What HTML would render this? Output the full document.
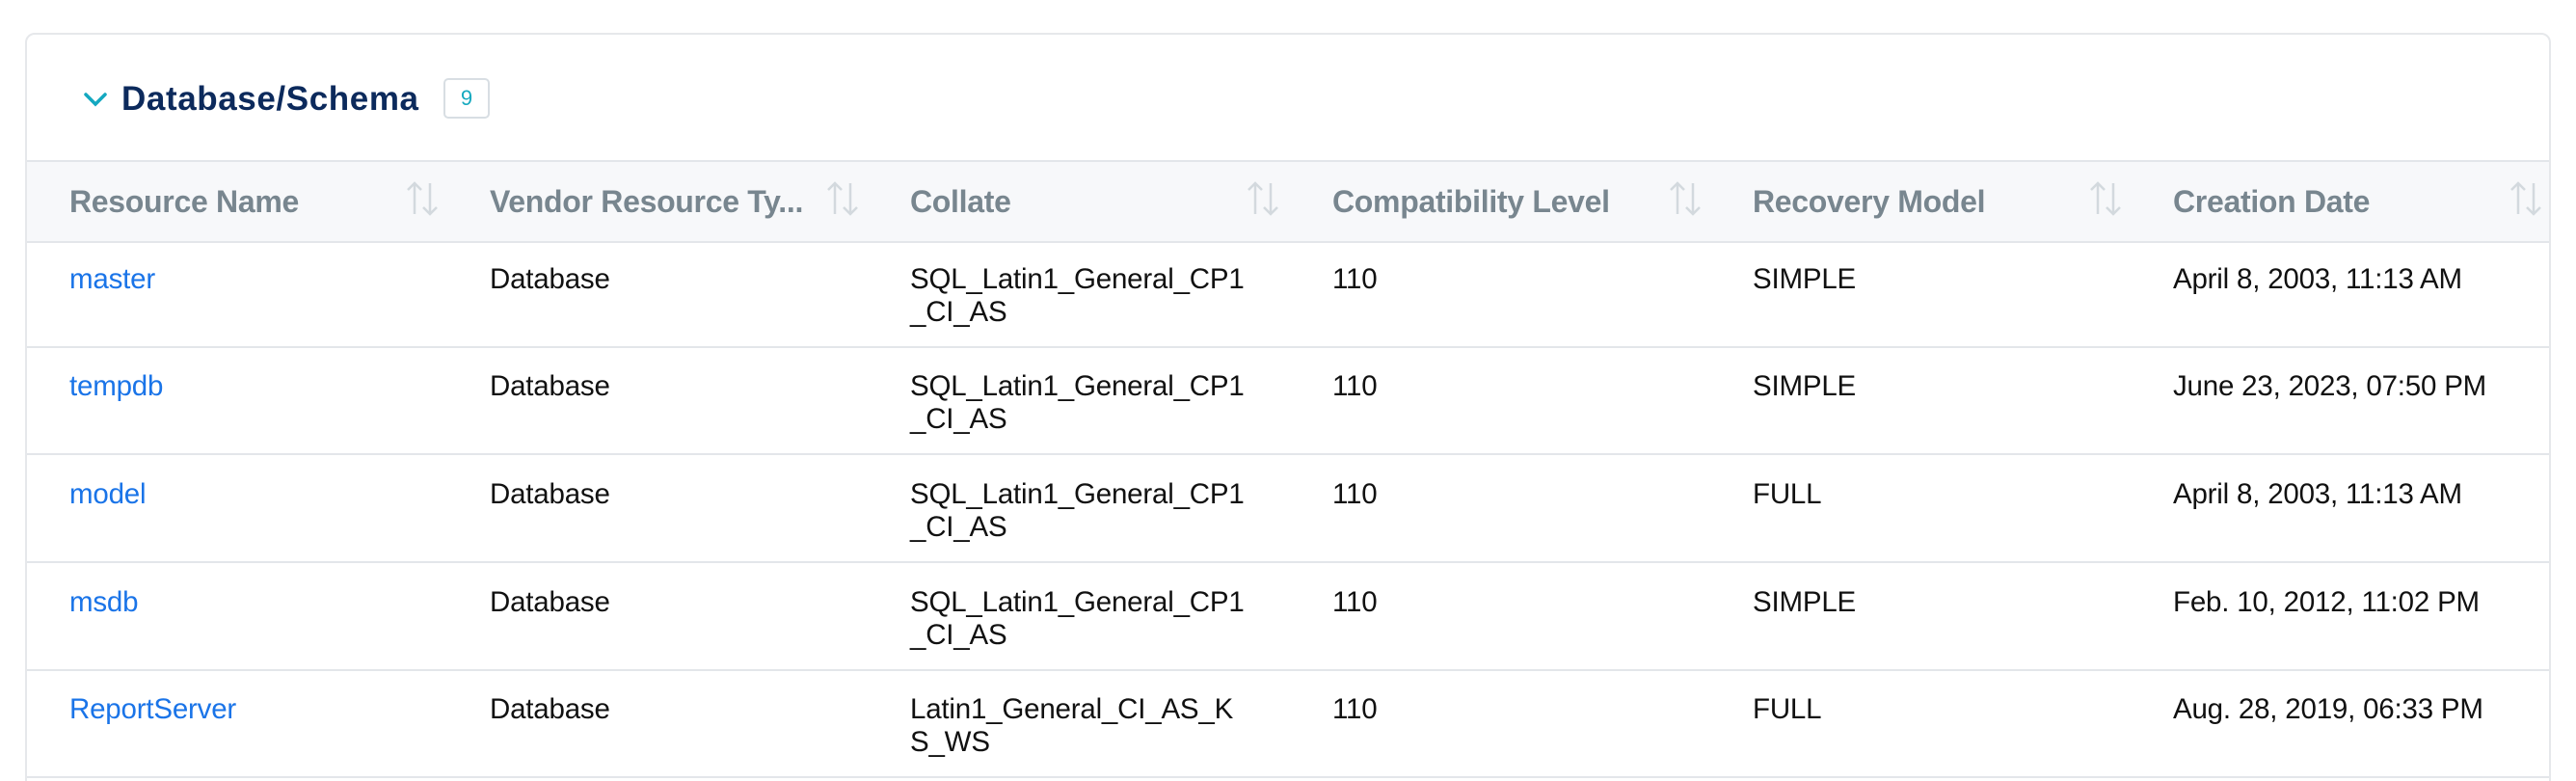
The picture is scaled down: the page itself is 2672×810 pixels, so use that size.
<!DOCTYPE html>
<html style="height:810px;overflow:hidden"><head><meta charset="utf-8"><style>
*{margin:0;padding:0;box-sizing:border-box}
body{width:2672px;height:810px;background:#fff;font-family:"Liberation Sans",sans-serif;overflow:hidden;position:relative}
.card{position:absolute;left:26px;top:34px;width:2620px;height:800px;border:2px solid #e6e8eb;border-radius:10px;background:#fff}
.title{position:absolute;left:58px;top:47px;height:40px;display:flex;align-items:center}
.title span{font-weight:bold;font-size:35px;color:#0c2a5c;margin-left:14px;letter-spacing:0.6px}
.badge{position:absolute;left:432px;top:45px;width:48px;height:42px;border:2px solid #d8dee3;border-radius:5px;color:#15a9bf;font-size:22px;text-align:center;line-height:38px}
.hdr{position:absolute;left:0;top:130px;width:2616px;height:86px;background:#f7f8fa;border-top:2px solid #e3e6ea;border-bottom:2px solid #e3e6ea}
.h{position:absolute;top:23px;font-weight:bold;font-size:32px;color:#78868f;letter-spacing:-0.3px;white-space:nowrap}
.row{position:absolute;left:0;width:2616px;height:111px;border-bottom:2px solid #e3e6ea}
.c{position:absolute;top:23px;font-size:29.5px;line-height:34px;color:#111;letter-spacing:-0.2px;white-space:nowrap}
.l{color:#1a74e8}
.si{position:absolute;top:186px}
</style></head><body>
<div class="card">
<div class="title"><svg width="26" height="18" viewBox="0 0 26 18"><path d="M3 4 L13 14 L23 4" stroke="#14a8c0" stroke-width="3.5" fill="none" stroke-linecap="round"/></svg><span>Database/Schema</span></div>
<div class="badge">9</div>
<div class="hdr">
<div class="h" style="left:44px">Resource Name</div>
<div class="h" style="left:480px">Vendor Resource Ty...</div>
<div class="h" style="left:916px">Collate</div>
<div class="h" style="left:1354px">Compatibility Level</div>
<div class="h" style="left:1790px">Recovery Model</div>
<div class="h" style="left:2226px">Creation Date</div>
</div>
</div>
<svg class="si" style="left:418px" width="40" height="40" viewBox="0 0 40 40"><path d="M12 4V36M5 11L12 4L19 11M28 4V36M21 29L28 36L35 29" stroke="#d3d9de" stroke-width="2.5" fill="none"/></svg>
<svg class="si" style="left:854px" width="40" height="40" viewBox="0 0 40 40"><path d="M12 4V36M5 11L12 4L19 11M28 4V36M21 29L28 36L35 29" stroke="#d3d9de" stroke-width="2.5" fill="none"/></svg>
<svg class="si" style="left:1290px" width="40" height="40" viewBox="0 0 40 40"><path d="M12 4V36M5 11L12 4L19 11M28 4V36M21 29L28 36L35 29" stroke="#d3d9de" stroke-width="2.5" fill="none"/></svg>
<svg class="si" style="left:1728px" width="40" height="40" viewBox="0 0 40 40"><path d="M12 4V36M5 11L12 4L19 11M28 4V36M21 29L28 36L35 29" stroke="#d3d9de" stroke-width="2.5" fill="none"/></svg>
<svg class="si" style="left:2164px" width="40" height="40" viewBox="0 0 40 40"><path d="M12 4V36M5 11L12 4L19 11M28 4V36M21 29L28 36L35 29" stroke="#d3d9de" stroke-width="2.5" fill="none"/></svg>
<svg class="si" style="left:2600px" width="40" height="40" viewBox="0 0 40 40"><path d="M12 4V36M5 11L12 4L19 11M28 4V36M21 29L28 36L35 29" stroke="#d3d9de" stroke-width="2.5" fill="none"/></svg>
<div style="position:absolute;left:28px;top:34px;width:2616px">
<div class="row" style="top:216px"><div class="c l" style="left:44px">master</div><div class="c" style="left:480px">Database</div><div class="c" style="left:916px">SQL_Latin1_General_CP1<br>_CI_AS</div><div class="c" style="left:1354px">110</div><div class="c" style="left:1790px">SIMPLE</div><div class="c" style="left:2226px">April 8, 2003, 11:13 AM</div></div>
<div class="row" style="top:327px"><div class="c l" style="left:44px">tempdb</div><div class="c" style="left:480px">Database</div><div class="c" style="left:916px">SQL_Latin1_General_CP1<br>_CI_AS</div><div class="c" style="left:1354px">110</div><div class="c" style="left:1790px">SIMPLE</div><div class="c" style="left:2226px">June 23, 2023, 07:50 PM</div></div>
<div class="row" style="top:439px"><div class="c l" style="left:44px">model</div><div class="c" style="left:480px">Database</div><div class="c" style="left:916px">SQL_Latin1_General_CP1<br>_CI_AS</div><div class="c" style="left:1354px">110</div><div class="c" style="left:1790px">FULL</div><div class="c" style="left:2226px">April 8, 2003, 11:13 AM</div></div>
<div class="row" style="top:551px"><div class="c l" style="left:44px">msdb</div><div class="c" style="left:480px">Database</div><div class="c" style="left:916px">SQL_Latin1_General_CP1<br>_CI_AS</div><div class="c" style="left:1354px">110</div><div class="c" style="left:1790px">SIMPLE</div><div class="c" style="left:2226px">Feb. 10, 2012, 11:02 PM</div></div>
<div class="row" style="top:662px"><div class="c l" style="left:44px">ReportServer</div><div class="c" style="left:480px">Database</div><div class="c" style="left:916px">Latin1_General_CI_AS_K<br>S_WS</div><div class="c" style="left:1354px">110</div><div class="c" style="left:1790px">FULL</div><div class="c" style="left:2226px">Aug. 28, 2019, 06:33 PM</div></div>
</div>
</body></html>
